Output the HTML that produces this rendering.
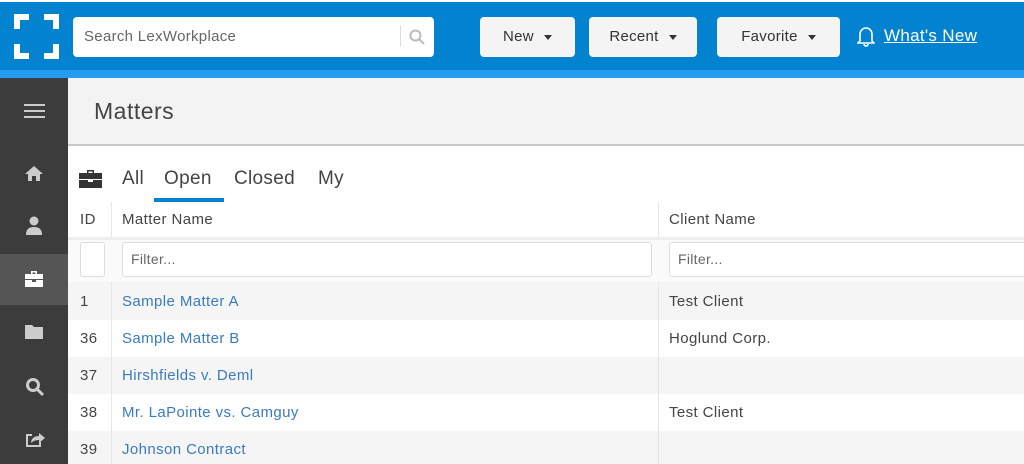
<!DOCTYPE html>
<html><head><style>
*{margin:0;padding:0;box-sizing:border-box}
body{width:1024px;height:464px;overflow:hidden;font-family:"Liberation Sans",sans-serif;background:#fff;position:relative}
.top{position:absolute;left:0;top:2px;width:1024px;height:68px;background:#0382cf}
.stripe{position:absolute;left:0;top:70px;width:1024px;height:8px;background:#259cf0}
.search{position:absolute;left:73px;top:17px;width:361px;height:40px;background:#fff;border-radius:4px;font-size:15px;color:#666;padding:11px 11px;letter-spacing:.3px}
.btn{position:absolute;top:17px;height:40px;background:#f4f4f4;border-radius:4px;font-size:15px;color:#333;padding-top:11px;text-align:center;letter-spacing:.3px}
.car{display:inline-block;width:0;height:0;border-left:4px solid transparent;border-right:4px solid transparent;border-top:5px solid #333;margin-left:10px;vertical-align:middle}
.side{position:absolute;left:0;top:78px;width:68px;height:386px;background:#3c3c3c}
.title{position:absolute;left:68px;top:78px;width:956px;height:68px;background:#f3f3f3;border-bottom:2px solid #c8c8c8;font-size:23px;color:#444;padding:20px 26px;letter-spacing:.5px}
.tab{position:absolute;top:168px;font-size:19px;color:#444;letter-spacing:.3px}
.row{position:absolute;left:68px;width:956px;font-size:15px;color:#444;letter-spacing:.4px}
.c1{position:absolute;left:12px}.c2{position:absolute;left:54px;color:#3a7bbf}.c3{position:absolute;left:601px}
.vl{position:absolute;top:202px;width:1px;background:#e6e6e6}
.filt{position:absolute;top:242px;height:35px;background:#fff;border:1px solid #ddd;border-radius:3px;font-size:14px;color:#666;padding:8px 8px;letter-spacing:.3px}
</style></head><body>
<div class="top"></div><div class="stripe"></div>
<svg style="position:absolute;left:14px;top:14px" width="45" height="45" viewBox="0 0 45 45" fill="#fff"><path d="M0 0h15v6H6v9H0zM30 0h15v15h-6V6h-9zM0 30h6v9h9v6H0zM39 30h6v15H30v-6h9z"/></svg>
<div class="search">Search LexWorkplace<span style="position:absolute;left:327px;top:8px;height:22px;border-left:1px solid #ddd"></span>
<svg style="position:absolute;left:336px;top:12px" width="16" height="16" viewBox="0 0 16 16" fill="none" stroke="#bbb" stroke-width="2"><circle cx="6.5" cy="6.5" r="5"/><path d="M10 10l5 5"/></svg></div>
<div class="btn" style="left:480px;width:95px">New<span class="car"></span></div>
<div class="btn" style="left:589px;width:108px">Recent<span class="car"></span></div>
<div class="btn" style="left:717px;width:123px">Favorite<span class="car"></span></div>
<svg style="position:absolute;left:857px;top:25px" width="18" height="22" viewBox="0 0 18 22" fill="none" stroke="#fff" stroke-width="1.6"><path d="M3 16V9a6 6 0 0112 0v7l2 2H1z M7 19a2 2 0 004 0"/></svg>
<div style="position:absolute;left:884px;top:26px;font-size:17px;color:#fff;text-decoration:underline;letter-spacing:.3px">What's New</div>
<div class="side"></div>
<div style="position:absolute;left:0;top:254px;width:68px;height:51px;background:#555"></div>
<div style="position:absolute;left:24px;top:104px;width:21px;height:14px;border-top:2px solid #ccc;border-bottom:2px solid #ccc"><div style="margin-top:4px;border-top:2px solid #ccc"></div></div>
<svg style="position:absolute;left:24px;top:164px" width="20" height="20" viewBox="0 0 20 20" fill="#ccc"><path d="M10 2L1 10h3v7h4v-5h4v5h4v-7h3z"/></svg>
<svg style="position:absolute;left:25px;top:216px" width="18" height="20" viewBox="0 0 18 20" fill="#ccc"><circle cx="9" cy="5" r="4.5"/><path d="M1 19c0-6 3-8 8-8s8 2 8 8z"/></svg>
<svg style="position:absolute;left:24px;top:270px" width="20" height="18" viewBox="0 0 20 18" fill="#fff"><path d="M7 1h6v3h-1.5V2.5h-3V4H7zM1 4h18v5H1zM1 10h7v2h4v-2h7v7H1z"/></svg>
<svg style="position:absolute;left:24px;top:324px" width="20" height="16" viewBox="0 0 20 16" fill="#ccc"><path d="M1 1h7l2 2h9v12H1z"/></svg>
<svg style="position:absolute;left:25px;top:377px" width="20" height="20" viewBox="0 0 20 20" fill="none" stroke="#ccc" stroke-width="3"><circle cx="8" cy="8" r="5.5"/><path d="M12 12l6 6"/></svg>
<svg style="position:absolute;left:24px;top:429px" width="22" height="20" viewBox="0 0 22 20"><path d="M2 5h6v2H4v9h11v-3h2v5H2z" fill="#ccc"/><path d="M7 14c0-5 4-7 8-7V4l6 5-6 5v-3c-3 0-6 1-8 3z" fill="#ccc"/></svg>
<div class="title">Matters</div>
<svg style="position:absolute;left:79px;top:169px" width="23" height="20" viewBox="0 0 23 20" fill="#333"><path d="M8 1h7v3h-1.5V2.5h-4V4H8zM0 4h23v6H0zM0 11h9v2h5v-2h9v8H0z"/></svg>
<div class="tab" style="left:122px">All</div>
<div class="tab" style="left:164px">Open</div>
<div style="position:absolute;left:154px;top:198px;width:70px;height:4px;background:#0382cf"></div>
<div class="tab" style="left:234px">Closed</div>
<div class="tab" style="left:318px">My</div>
<div style="position:absolute;left:68px;top:202px;width:956px;height:1px;background:#e6e6e6"></div>
<div class="row" style="top:202px;height:35px;background:#fff"><span class="c1" style="top:9px">ID</span><span class="c2" style="top:9px;color:#444">Matter Name</span><span class="c3" style="top:9px">Client Name</span></div>
<div class="row" style="top:237px;height:45px;background:#fafafa;border-top:3px solid #eee"></div>
<div class="filt" style="left:80px;width:25px"></div>
<div class="filt" style="left:122px;width:530px">Filter...</div>
<div class="filt" style="left:669px;width:360px">Filter...</div>
<div class="row" style="top:282px;height:38px;background:#f5f5f5"><span class="c1" style="top:11px">1</span><span class="c2" style="top:11px">Sample Matter A</span><span class="c3" style="top:11px">Test Client</span></div>
<div class="row" style="top:320px;height:37px;background:#fff"><span class="c1" style="top:10px">36</span><span class="c2" style="top:10px">Sample Matter B</span><span class="c3" style="top:10px">Hoglund Corp.</span></div>
<div class="row" style="top:357px;height:37px;background:#f5f5f5"><span class="c1" style="top:10px">37</span><span class="c2" style="top:10px">Hirshfields v. Deml</span></div>
<div class="row" style="top:394px;height:37px;background:#fff"><span class="c1" style="top:10px">38</span><span class="c2" style="top:10px">Mr. LaPointe vs. Camguy</span><span class="c3" style="top:10px">Test Client</span></div>
<div class="row" style="top:431px;height:33px;background:#f5f5f5"><span class="c1" style="top:10px">39</span><span class="c2" style="top:10px">Johnson Contract</span></div>
<div class="vl" style="left:111px;height:35px"></div><div class="vl" style="left:111px;top:282px;height:182px"></div>
<div class="vl" style="left:658px;height:35px"></div><div class="vl" style="left:658px;top:282px;height:182px"></div>
</body></html>
